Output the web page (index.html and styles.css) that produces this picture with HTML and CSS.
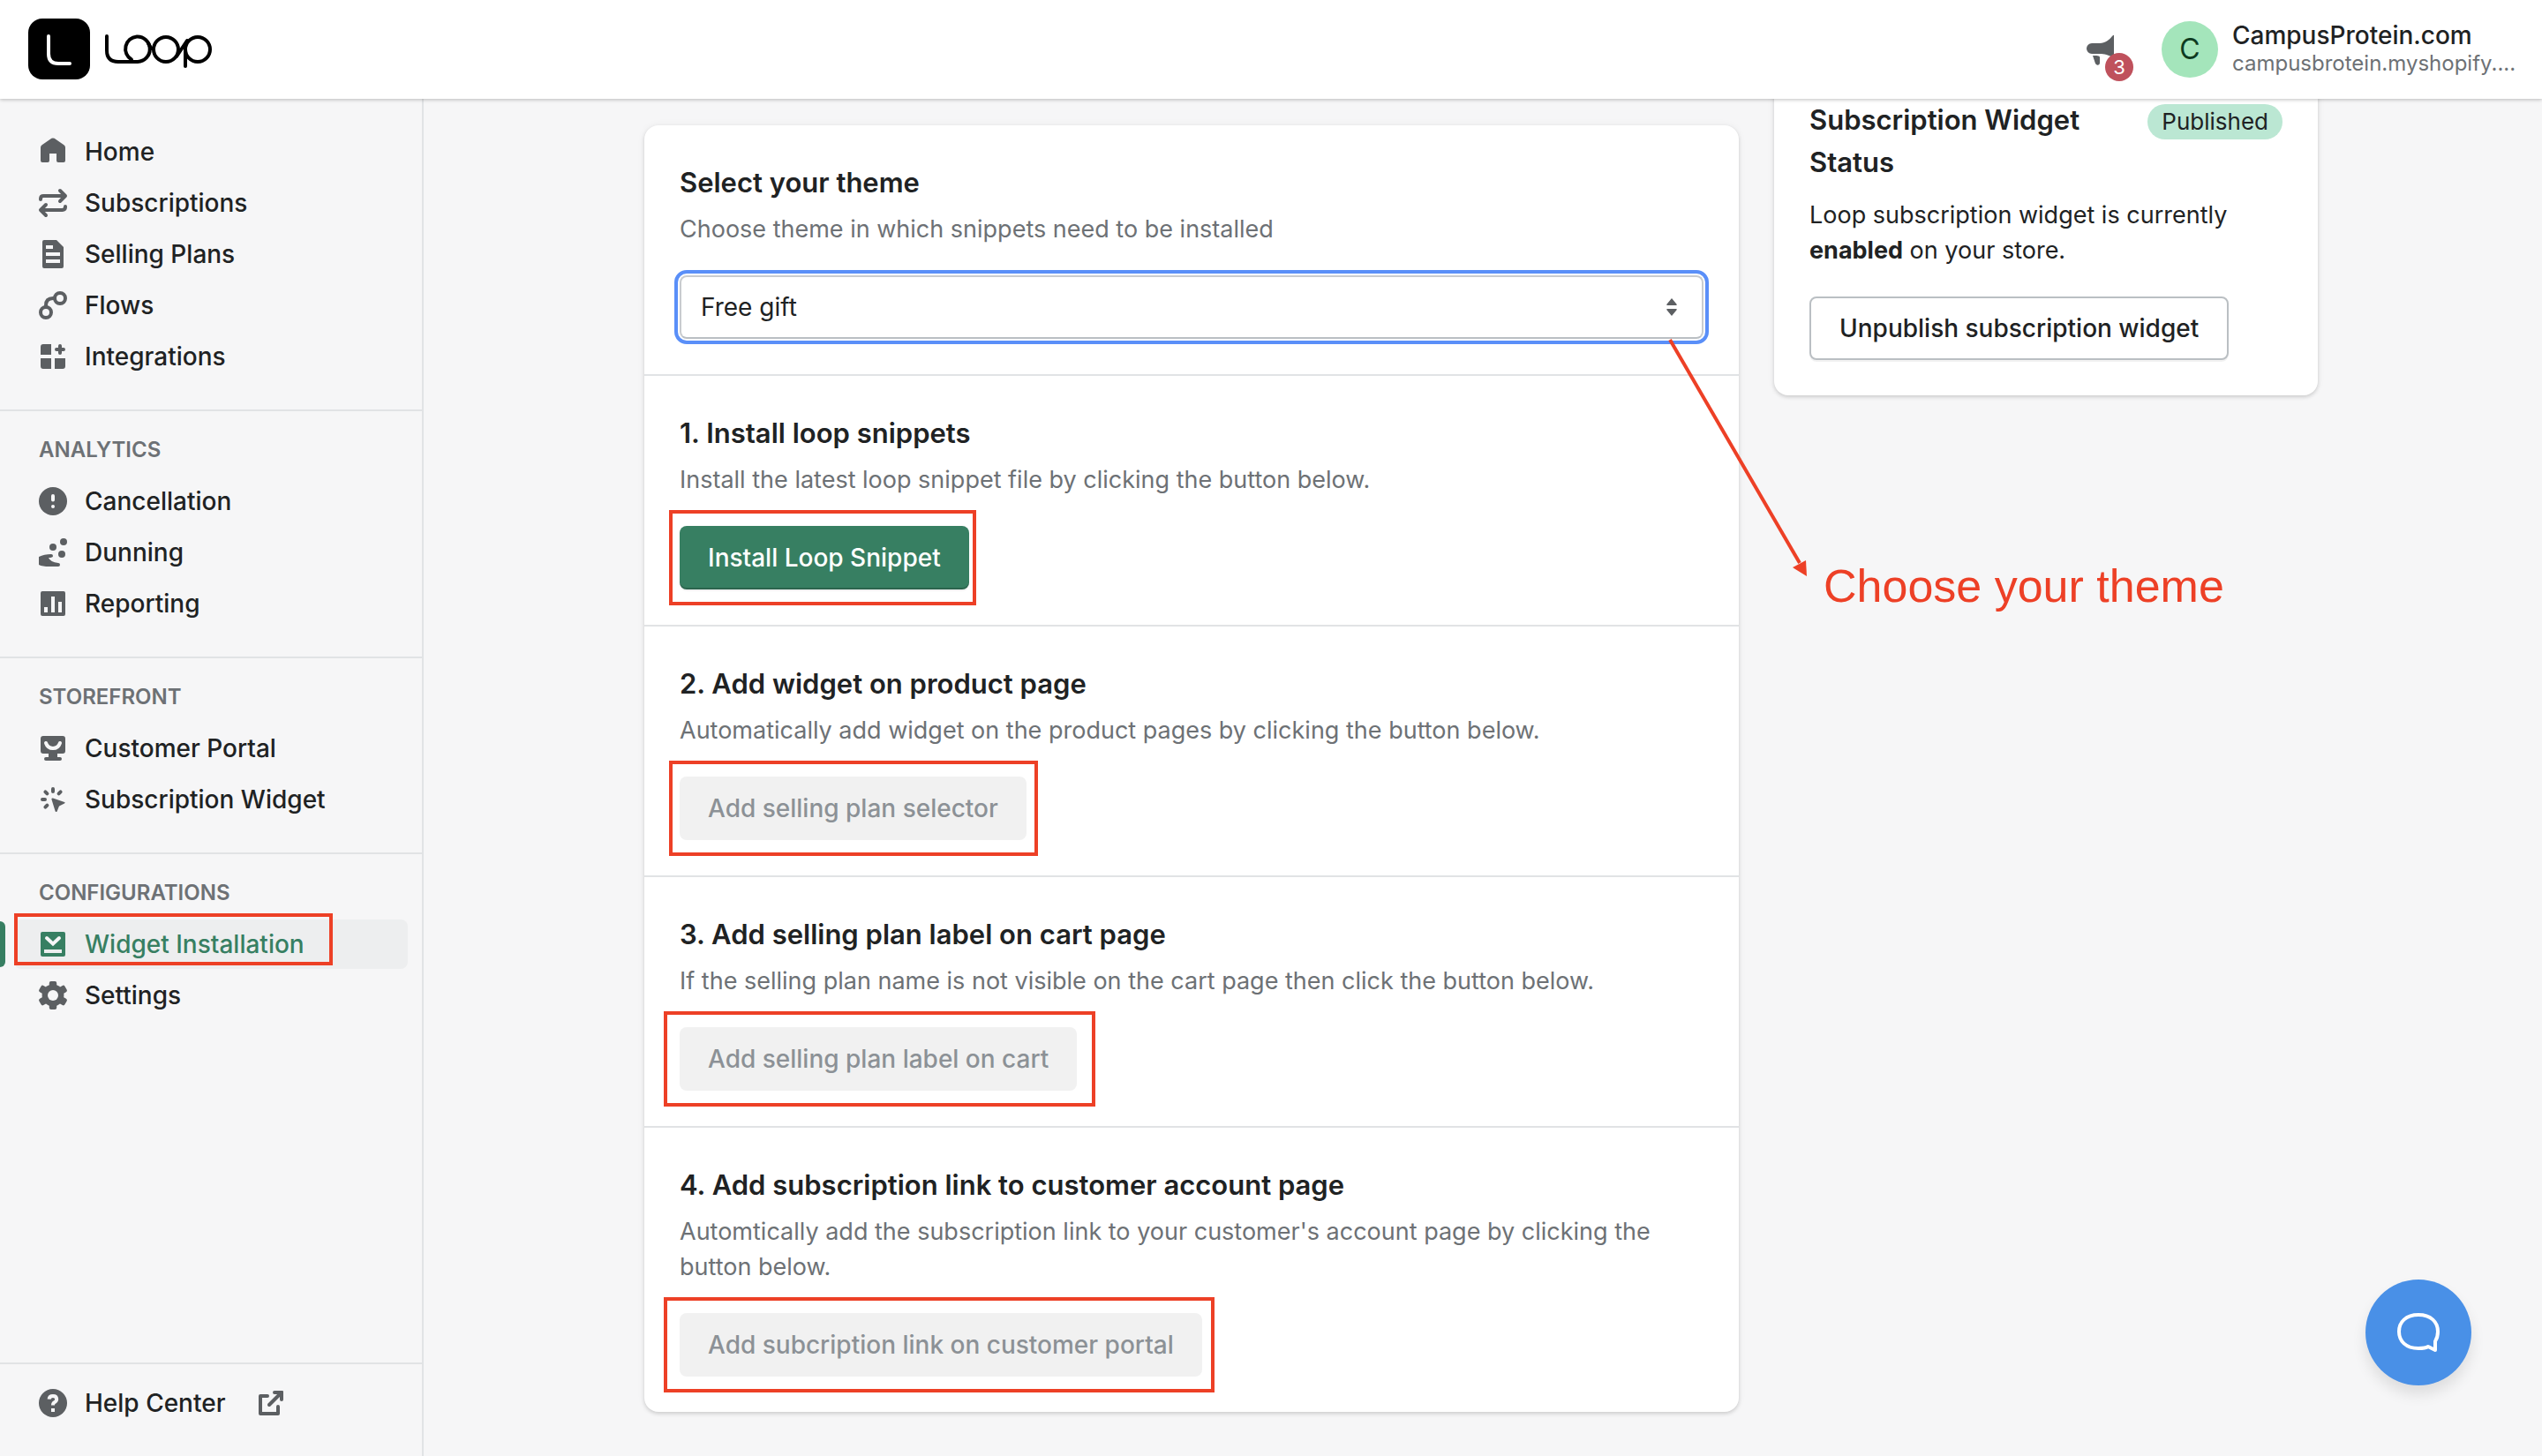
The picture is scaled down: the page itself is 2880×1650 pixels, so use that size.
FILE: index.html
```html
<!DOCTYPE html>
<html lang="en">
<head>
<meta charset="utf-8">
<title>Loop – Widget Installation</title>
<link rel="stylesheet" href="styles.css">
</head>
<body>
<header class="topbar">
  <a class="logo" href="#" aria-label="Loop">
    <svg width="70" height="70" viewBox="0 0 70 70"><rect width="70" height="69" rx="16"/><path d="M23 20v20q0 11 11 11h13" fill="none" stroke="#fff" stroke-width="4" stroke-linecap="round"/></svg>
    <svg width="122" height="42" viewBox="0 -2 122 42" fill="none" stroke="#000" stroke-width="4" stroke-linecap="round" stroke-linejoin="round"><path d="M3 4v16q0 13 13 13h22a14 14 0 1 0-1-28.500a14 14 0 0 0-6 26"/><circle cx="70" cy="19" r="14"/><path d="M50 12q3 6 4 6M82 27l12-18"/><circle cx="106" cy="19" r="14"/><path d="M92 19v19"/></svg>
  </a>
  <div class="account">
    <button class="news" type="button" aria-label="Announcements">
      <svg width="40" height="40" viewBox="0 0 40 40" fill="#5c5f62"><path d="M34 4v26c-6-4-11-5-16-5H9a6 6 0 0 1 0-12h9c6 0 11-4 14-8q2-2 2-1zM10 27c4 0 8 0 8 2v6c0 3-3 4-5 1z"/></svg>
      <span class="news-count">3</span>
    </button>
    <span class="avatar">C</span>
    <div class="store">
      <p class="store-name">CampusProtein.com</p>
      <p class="store-url">campusbrotein.myshopify....</p>
    </div>
  </div>
</header>
<div class="frame">
  <nav class="sidebar">
    <section class="group">
      <a class="item" href="#"><svg viewBox="0 0 20 20"><path d="M10 2.200q.4 0 .8.200l5.400 3.700q.8.500.8 1.400V15a1 1 0 0 1-1 1h-3a1 1 0 0 1-1-1v-4H8v4a1 1 0 0 1-1 1H4a1 1 0 0 1-1-1V7.500q0-.9.800-1.400l5.400-3.700q.4-.2.800-.2z"/></svg>Home</a>
      <a class="item" href="#"><svg viewBox="0 0 20 20"><path class="line" d="M3 8V7.700Q3 6 4.700 6H16.500M14 3l3 3-3 3M17 12v.300q0 1.700-1.700 1.700H3.500M6 11l-3 3 3 3"/></svg>Subscriptions</a>
      <a class="item" href="#"><svg viewBox="0 0 20 20"><path fill-rule="evenodd" d="M5 2h7l4 4v11a1 1 0 0 1-1 1H5a1 1 0 0 1-1-1V3a1 1 0 0 1 1-1zm1 3v2h4V5zm0 4v2h8V9zm0 4v2h8v-2z"/></svg>Selling Plans</a>
      <a class="item" href="#"><svg viewBox="0 0 20 20"><circle class="line" cx="14" cy="6" r="3"/><circle class="line" cx="6" cy="14" r="3"/><path class="line" d="M6 11V10q0-4 4-4h1"/></svg>Flows</a>
      <a class="item" href="#"><svg viewBox="0 0 20 20"><path d="M4.500 3H9v6H3V4.500Q3 3 4.500 3zM3 11h6v6H4.500Q3 17 3 15.500zM11 11h6v4.500q0 1.500-1.500 1.500H11z"/><path class="line" d="M14 4v4M12 6h4"/></svg>Integrations</a>
    </section>
    <section class="group">
      <h2 class="group-title">ANALYTICS</h2>
      <a class="item" href="#"><svg viewBox="0 0 20 20"><circle cx="10" cy="10" r="8"/><path class="cut" d="M10 7v2.200M10 13h.01"/></svg>Cancellation</a>
      <a class="item" href="#"><svg viewBox="0 0 20 20"><circle cx="16" cy="4" r="2"/><circle cx="10" cy="7" r="2"/><circle cx="15" cy="11" r="2"/><path d="M2 12.500q3-1.500 7-1.500 1 0 1 1t-2.500 1q1 2.500 5.500 3 1 0 1 1t-1 1H8q-4 0-6-1z"/></svg>Dunning</a>
      <a class="item" href="#"><svg viewBox="0 0 20 20"><path fill-rule="evenodd" d="M4 3h12a1 1 0 0 1 1 1v12a1 1 0 0 1-1 1H4a1 1 0 0 1-1-1V4a1 1 0 0 1 1-1zm5 3v9h2V6zm4 3v6h2V9zm-8 3v3h2v-3z"/></svg>Reporting</a>
    </section>
    <section class="group">
      <h2 class="group-title">STOREFRONT</h2>
      <a class="item" href="#"><svg viewBox="0 0 20 20"><path d="M4.500 3h11Q17 3 17 4.500v7q0 1.500-1.500 1.500H12.500v2H14a1 1 0 0 1 0 2H6a1 1 0 0 1 0-2h1.500v-2h-3Q3 13 3 11.500v-7Q3 3 4.500 3z"/><path class="cut" d="M6 7q1 3 4 3t4-3"/></svg>Customer Portal</a>
      <a class="item" href="#"><svg viewBox="0 0 20 20"><path d="M9.200 9.900q0-.8.800-.6l6.500 2.200q.8.400 0 .8l-3 1.500-1.200 2.900q-.5.700-1-.1z"/><path class="line" d="M10 4v1.500M5.700 5.700l1 1M14.300 5.700l-1 1M4 10h1.500M5.700 14.300l1-1"/></svg>Subscription Widget</a>
    </section>
    <section class="group">
      <h2 class="group-title">CONFIGURATIONS</h2>
      <a class="item active" href="#" aria-current="page"><svg viewBox="0 0 20 20"><rect x="3" y="3" width="14" height="14" rx="1"/><path class="cut" d="M6.500 6.500L10 9.800l3.500-3.300"/><path fill="#edeeef" d="M5 13h10v2H5z"/></svg>Widget Installation<span class="mark mark-nav"></span></a>
      <a class="item" href="#"><svg viewBox="0 0 20 20"><circle cx="10" cy="10" r="6.200"/><rect x="7.900" y="2" width="4.200" height="16" rx="1"/><rect x="7.900" y="1.600" width="4.200" height="16.800" rx="1" transform="rotate(60 10 10)"/><rect x="7.900" y="1.600" width="4.200" height="16.800" rx="1" transform="rotate(120 10 10)"/><circle cx="10" cy="10" r="3" fill="#f6f6f7"/></svg>Settings</a>
    </section>
    <section class="group help">
      <a class="item" href="#"><svg viewBox="0 0 20 20"><circle cx="10" cy="10" r="8"/><path class="cut butt" d="M7.800 7.800Q8 6 10 6t2.100 1.800Q12 9 10.800 9.600 10 10 10 11.200"/><path fill="#f6f6f7" d="M9 13h2v2H9z"/></svg>Help Center<svg class="external" viewBox="0 0 20 20"><path class="line" d="M8 6H4v10h10v-4"/><path class="line" d="M9 11l6-6"/><path d="M12 3h4.500q.5 0 .5.500V8q0 1-1 1t-1-1V5h-3q-1 0-1-1t1-1z"/></svg></a>
    </section>
  </nav>
  <main class="content">
    <div class="layout">
      <article class="card">
        <section class="step">
          <h2 class="title">Select your theme</h2>
          <p class="desc" id="theme-help">Choose theme in which snippets need to be installed</p>
          <div class="picker">
            <select class="select" aria-labelledby="theme-help"><option>Free gift</option></select>
            <svg class="carets" viewBox="0 0 20 20" fill="#5c5f62"><path d="M10 5l2.800 3.400q.4.600-.4.600H7.600q-.8 0-.4-.6zM10 15l-2.800-3.400q-.4-.6.400-.6h4.800q.8 0 .4.600z"/></svg>
            <svg class="arrow" width="170" height="280" viewBox="0 0 170 280"><path d="M2 1L149 254" stroke="#ed4026" stroke-width="4"/><path d="M157 269L156 251L141 259z" fill="#ed4026"/></svg>
            <span class="callout">Choose your theme</span>
          </div>
        </section>
        <section class="step">
          <h2 class="title">1. Install loop snippets</h2>
          <p class="desc">Install the latest loop snippet file by clicking the button below.</p>
          <div class="action"><button class="btn primary" type="button">Install Loop Snippet</button><span class="mark mark-install"></span></div>
        </section>
        <section class="step">
          <h2 class="title">2. Add widget on product page</h2>
          <p class="desc">Automatically add widget on the product pages by clicking the button below.</p>
          <div class="action"><button class="btn" type="button" disabled>Add selling plan selector</button><span class="mark mark-selector"></span></div>
        </section>
        <section class="step">
          <h2 class="title">3. Add selling plan label on cart page</h2>
          <p class="desc">If the selling plan name is not visible on the cart page then click the button below.</p>
          <div class="action"><button class="btn" type="button" disabled>Add selling plan label on cart</button><span class="mark mark-label"></span></div>
        </section>
        <section class="step">
          <h2 class="title">4. Add subscription link to customer account page</h2>
          <p class="desc">Automtically add the subscription link to your customer's account page by clicking the button below.</p>
          <div class="action"><button class="btn" type="button" disabled>Add subcription link on customer portal</button><span class="mark mark-portal"></span></div>
        </section>
      </article>
      <aside class="card status">
        <div class="status-head">
          <h2 class="title">Subscription Widget Status</h2>
          <span class="badge">Published</span>
        </div>
        <p class="status-text">Loop subscription widget is currently <strong>enabled</strong> on your store.</p>
        <button class="btn outline" type="button">Unpublish subscription widget</button>
      </aside>
    </div>
  </main>
</div>
<button class="chat" type="button" aria-label="Open chat"><svg width="60" height="60" viewBox="0 0 60 60" fill="none" stroke="#fff" stroke-width="4" stroke-linejoin="round"><path d="M30 10c14 0 22 8 22 19 0 5-1 8-3 11v10l-8-4c-3 2-7 2-11 2C16 48 8 40 8 29S16 10 30 10z"/></svg></button>
</body>
</html>
```
FILE: styles.css
```css
* { box-sizing: border-box; }
body, h2, p { margin: 0; }
body {
  background: #f6f6f7;
  color: #202223;
  font: 400 28px/40px Inter, "Liberation Sans", sans-serif;
}
button, select { font: inherit; color: inherit; }
a { color: inherit; text-decoration: none; }

.topbar {
  position: sticky;
  top: 0;
  z-index: 10;
  display: flex;
  align-items: center;
  justify-content: space-between;
  height: 112px;
  padding: 0 32px;
  background: #fff;
  box-shadow: 0 0 4px rgba(0, 0, 0, .2), 0 2px 4px rgba(0, 0, 0, .1);
}
.logo { display: flex; align-items: center; gap: 16px; }
.account { display: flex; align-items: center; }
.news {
  position: relative;
  width: 40px;
  height: 40px;
  margin-right: 48px;
  padding: 0;
  border: 0;
  background: none;
}
.news svg { display: block; }
.news-count {
  position: absolute;
  left: 24px;
  top: 24px;
  width: 32px;
  border-radius: 16px;
  background: #bf515c;
  color: #fff;
  font-size: 22px;
  line-height: 32px;
  text-align: center;
}
.avatar {
  width: 64px;
  margin-right: 16px;
  border-radius: 50%;
  background: #a4e5bb;
  color: #0e3a20;
  font-size: 32px;
  line-height: 64px;
  text-align: center;
}
.store { width: 319px; white-space: nowrap; }
.store-name { font-weight: 500; line-height: 32px; }
.store-url { color: #6d7175; font-size: 24px; line-height: 32px; }

.frame { display: flex; min-height: calc(100vh - 112px); }
.sidebar {
  display: flex;
  flex: none;
  flex-direction: column;
  width: 480px;
  padding-top: 32px;
  border-right: 2px solid #e1e3e5;
}
.group {
  display: flex;
  flex-direction: column;
  gap: 2px;
  padding: 0 16px 32px;
}
.group + .group { padding-top: 16px; border-top: 2px solid #e1e3e5; }
.group-title {
  padding-left: 28px;
  color: #6d7175;
  font-size: 24px;
  font-weight: 600;
  line-height: 56px;
}
.item {
  position: relative;
  display: flex;
  align-items: center;
  gap: 16px;
  height: 56px;
  padding-left: 24px;
  border-radius: 8px;
  font-weight: 500;
}
.item svg { flex: none; width: 40px; height: 40px; fill: #5c5f62; }
.item svg .line {
  fill: none;
  stroke: #5c5f62;
  stroke-width: 2;
  stroke-linecap: round;
  stroke-linejoin: round;
}
.item svg .cut { fill: none; stroke: #f6f6f7; stroke-width: 2; stroke-linecap: round; }
.item svg .butt { stroke-linecap: butt; }
.item .external { margin-left: 16px; }
.active { background: #edeeef; color: #377f62; }
.item.active svg { fill: #377f62; }
.active::before {
  position: absolute;
  left: -16px;
  top: 2px;
  bottom: 2px;
  width: 6px;
  border-radius: 0 6px 6px 0;
  background: #377f62;
  content: "";
}
.help { margin-top: auto; }

.content { flex: 1; padding: 0 4px 48px 0; }
.layout {
  display: grid;
  grid-template-columns: 1240fr 616fr;
  align-items: start;
  gap: 40px;
  max-width: 1896px;
  margin: 0 auto;
}
.card {
  margin-top: 30px;
  border-radius: 16px;
  background: #fff;
  box-shadow: 0 0 10px rgba(23, 24, 24, .05), 0 2px 4px rgba(0, 0, 0, .15);
}
.step { padding: 40px; }
.step + .step { border-top: 2px solid #e1e3e5; }
.title { font-size: 31px; font-weight: 600; line-height: 48px; }
.step .title { line-height: 50px; }
.desc { margin: 8px 0 32px; color: #6d7175; font-size: 27px; }
.picker { position: relative; }
.select {
  display: block;
  width: 100%;
  height: 72px;
  padding: 0 22px;
  border: 2px solid #c9cccf;
  border-bottom-color: #babfc3;
  border-radius: 8px;
  outline: 4px solid #5a8ff8;
  outline-offset: 2px;
  background: #fff;
  appearance: none;
}
.carets { position: absolute; right: 16px; top: 16px; width: 40px; height: 40px; }
.arrow { position: absolute; right: -130px; top: 72px; z-index: 2; }
.callout {
  position: absolute;
  left: 100%;
  top: 320px;
  z-index: 2;
  margin-left: 136px;
  color: #ed4026;
  font: 52px/64px "Liberation Sans", Arial, sans-serif;
  white-space: nowrap;
}
.action { position: relative; }
.btn {
  display: block;
  height: 72px;
  padding: 0 32px;
  border: 0;
  border-radius: 8px;
  background: #f1f1f1;
  color: #8c9196;
  font-weight: 500;
}
.primary {
  background: #377f62;
  box-shadow: 0 2px 0 rgba(0, 0, 0, .05), inset 0 -2px 0 rgba(0, 0, 0, .2);
  color: #fff;
}
.outline {
  border: 2px solid #babfc3;
  background: #fff;
  box-shadow: 0 2px 0 rgba(0, 0, 0, .05);
  color: #202223;
}
.mark { position: absolute; left: -18px; top: -18px; height: 108px; border: 4px solid #ed4026; }
.mark-nav { left: 0; top: -7px; width: 361px; height: 59px; }
.mark-install { left: -12px; width: 348px; }
.mark-selector { left: -12px; width: 418px; }
.mark-label { width: 489px; }
.mark-portal { width: 624px; }

.status { margin-top: -40px; padding: 40px; }
.status-head { display: flex; align-items: flex-start; justify-content: space-between; gap: 40px; }
.badge {
  margin-top: 6px;
  padding: 0 16px;
  border-radius: 20px;
  background: #bbe7d3;
  font-size: 26px;
}
.status-text { margin: 16px 0 32px; font-size: 27px; }

.chat {
  position: fixed;
  right: 80px;
  bottom: 80px;
  z-index: 5;
  display: grid;
  place-items: center;
  width: 120px;
  height: 120px;
  padding: 0;
  border: 0;
  border-radius: 50%;
  background: #4990e7;
  box-shadow: 0 10px 16px rgba(0, 0, 0, .1);
}
```
